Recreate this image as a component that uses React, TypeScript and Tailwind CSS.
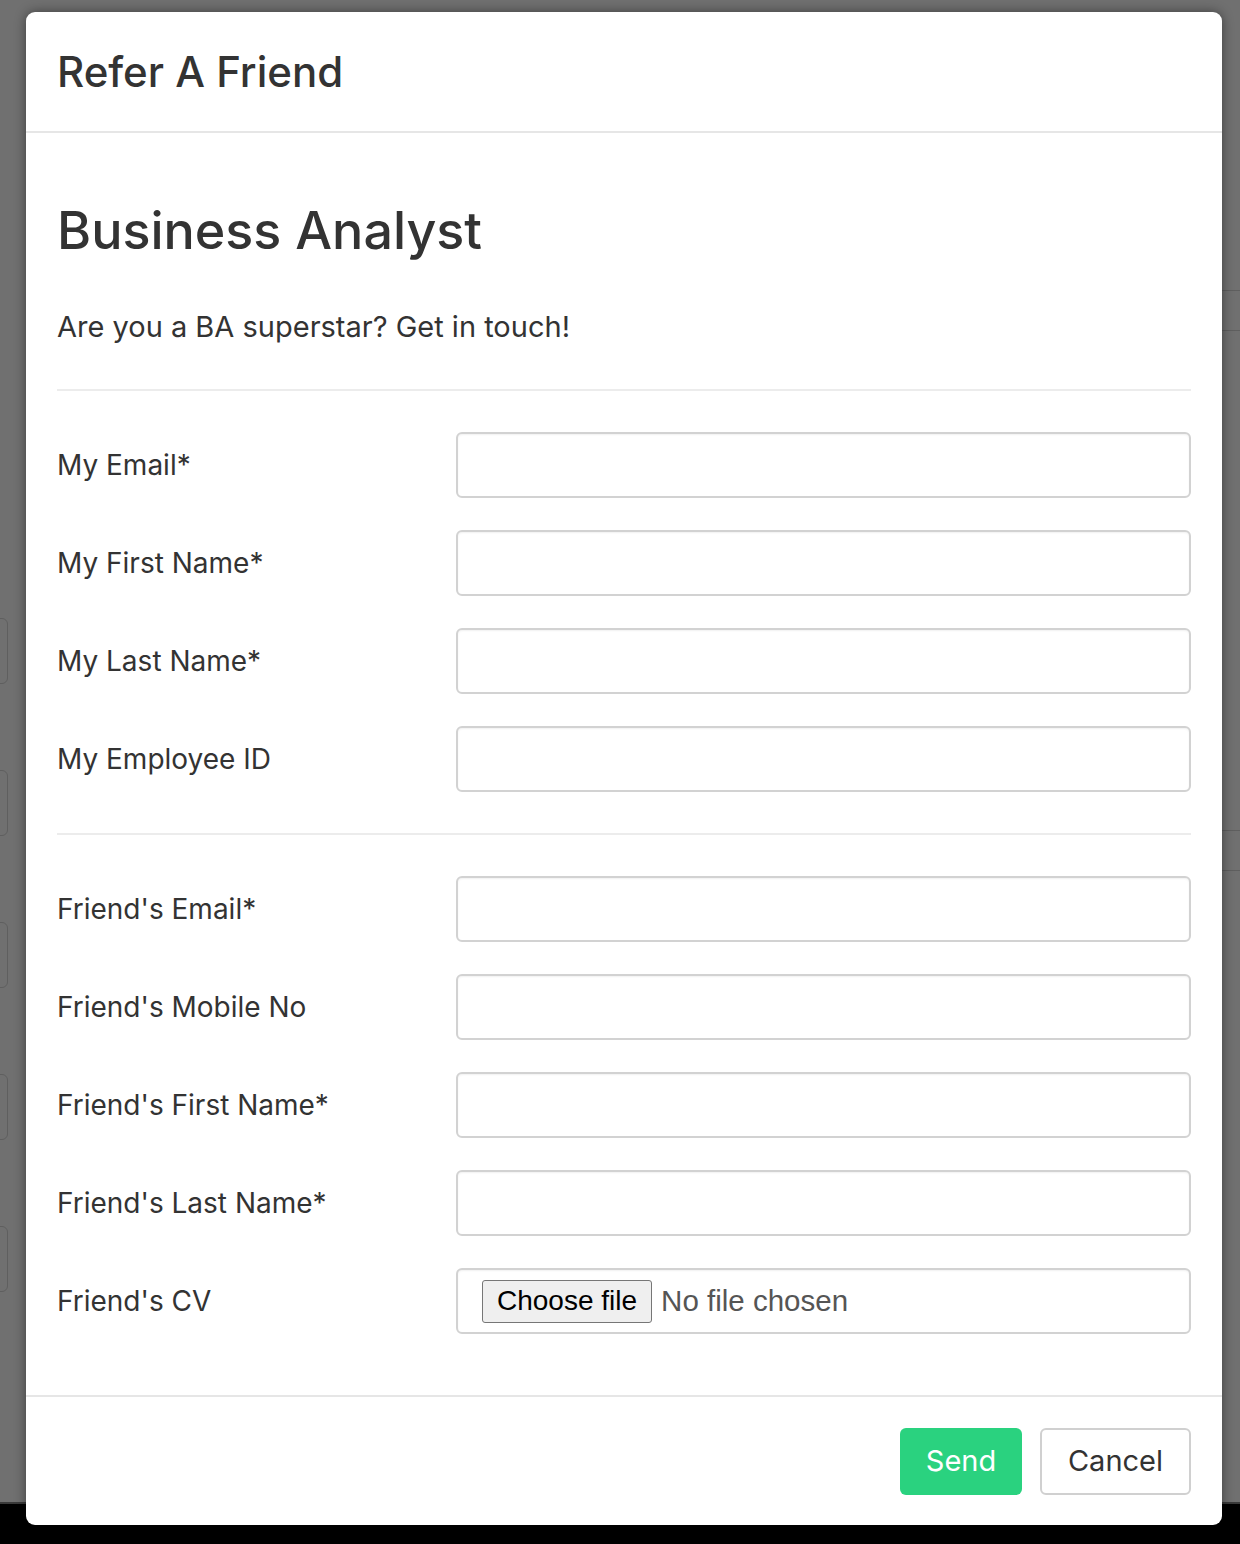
import React from "react";

const font = { fontFamily: "Inter, 'Noto Sans', sans-serif" };

function Row({ label, file }: { label: string; file?: boolean }) {
  return (
    <div className="flex items-center h-[66px]">
      <div className="w-[399px] shrink-0 text-[28px] leading-[40px] text-[#333333]">{label}</div>
      <div className="flex-1 h-[66px] rounded-[6px] border-2 border-[#d2d2d2] bg-white shadow-[inset_0_1px_2px_rgba(0,0,0,0.06)] flex items-center">
        {file && (
          <div className="flex items-center pl-[24px]" style={{ fontFamily: "'Liberation Sans', Arial, sans-serif" }}>
            <div className="h-[43px] px-[14px] flex items-center bg-[#efefef] border border-[#767676] rounded-[3px] text-[28px] text-black">
              Choose file
            </div>
            <span className="ml-[9px] text-[29.5px] text-[#555555]">No file chosen</span>
          </div>
        )}
      </div>
    </div>
  );
}

export default function App() {
  return (
    <div className="relative w-[1240px] h-[1544px] overflow-hidden" style={font}>
      <div className="flex flex-col h-full">
        <div className="h-[1502px] bg-[#707070] relative">
          <div className="absolute left-[-8px] top-[618px] w-[16px] h-[66px] rounded-[6px] border border-[#5f5f5f]" />
          <div className="absolute left-[-8px] top-[770px] w-[16px] h-[66px] rounded-[6px] border border-[#5f5f5f]" />
          <div className="absolute left-[-8px] top-[922px] w-[16px] h-[66px] rounded-[6px] border border-[#5f5f5f]" />
          <div className="absolute left-[-8px] top-[1074px] w-[16px] h-[66px] rounded-[6px] border border-[#5f5f5f]" />
          <div className="absolute left-[-8px] top-[1226px] w-[16px] h-[66px] rounded-[6px] border border-[#5f5f5f]" />
          <div className="absolute right-0 top-[290px] w-[20px] h-px bg-[#5f5f5f]" />
          <div className="absolute right-0 top-[330px] w-[20px] h-px bg-[#5f5f5f]" />
          <div className="absolute right-0 top-[830px] w-[20px] h-px bg-[#5f5f5f]" />
          <div className="absolute right-0 top-[870px] w-[20px] h-px bg-[#5f5f5f]" />
        </div>
        <div className="flex-1 bg-black border-t-2 border-[#3a3a3a]" />
      </div>

      <div className="absolute left-[26px] top-[12px] w-[1196px] h-[1513px] bg-white rounded-[9px] shadow-[0_0_12px_rgba(0,0,0,0.45)] flex flex-col">
        <div className="h-[121px] shrink-0 border-b-2 border-[#e6e6e6] flex items-center px-[31px]">
          <h1 className="text-[42px] leading-[50px] font-medium text-[#333333]">Refer A Friend</h1>
        </div>
        <div className="px-[31px] pt-[66px] pb-[61px] flex flex-col">
          <h2 className="text-[52px] leading-[64px] font-medium text-[#333333]">Business Analyst</h2>
          <p className="mt-[44px] text-[29px] leading-[40px] text-[#333333]">Are you a BA superstar? Get in touch!</p>
          <div className="mt-[42px] h-[2px] bg-[#ececec]" />
          <div className="mt-[41px] flex flex-col gap-[32px]">
            <Row label="My Email*" />
            <Row label="My First Name*" />
            <Row label="My Last Name*" />
            <Row label="My Employee ID" />
          </div>
          <div className="mt-[41px] h-[2px] bg-[#ececec]" />
          <div className="mt-[41px] flex flex-col gap-[32px]">
            <Row label="Friend's Email*" />
            <Row label="Friend's Mobile No" />
            <Row label="Friend's First Name*" />
            <Row label="Friend's Last Name*" />
            <Row label="Friend's CV" file />
          </div>
        </div>
        <div className="flex-1 border-t-2 border-[#e6e6e6] flex items-center justify-end gap-[18px] px-[31px]">
          <button className="h-[67px] w-[122px] rounded-[6px] bg-[#2ad27f] text-white text-[29px]">Send</button>
          <button className="h-[67px] w-[151px] rounded-[6px] border-2 border-[#d0d0d0] bg-white text-[#333333] text-[29px]">Cancel</button>
        </div>
      </div>
    </div>
  );
}
